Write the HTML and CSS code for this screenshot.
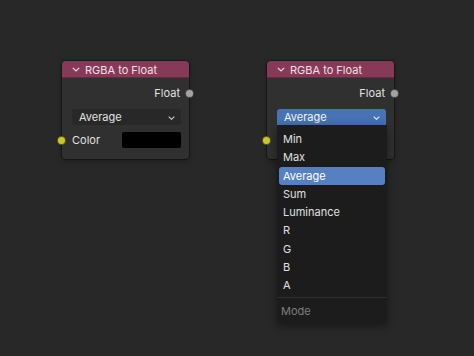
FILE: index.html
```html
<!DOCTYPE html>
<html>
<head>
<meta charset="utf-8">
<link rel="stylesheet" href="styles.css">
</head>
<body>
<div class="canvas">
  <div class="node">
    <div class="header">
      <svg class="chev" width="8" height="5" viewBox="0 0 8 5"><path d="M0.8 0.8 L4 4 L7.2 0.8" fill="none" stroke="#e6d8de" stroke-width="1.2"/></svg>
      <span>RGBA to Float</span>
    </div>
    <div class="body">
      <div class="row out">
        <span>Float</span>
        <i class="sock gray right"></i>
      </div>
      <div class="select">
        <span>Average</span>
        <svg class="dchev" width="7" height="4" viewBox="0 0 7 4"><path d="M0.7 0.7 L3.5 3.3 L6.3 0.7" fill="none" stroke="#cfcfcf" stroke-width="1.1"/></svg>
      </div>
      <div class="row in">
        <i class="sock yellow left"></i>
        <span class="lbl">Color</span>
        <div class="swatch"></div>
      </div>
    </div>
  </div>

  <div class="node">
    <div class="header">
      <svg class="chev" width="8" height="5" viewBox="0 0 8 5"><path d="M0.8 0.8 L4 4 L7.2 0.8" fill="none" stroke="#e6d8de" stroke-width="1.2"/></svg>
      <span>RGBA to Float</span>
    </div>
    <div class="body">
      <div class="row out">
        <span>Float</span>
        <i class="sock gray right"></i>
      </div>
      <div class="select open">
        <span>Average</span>
        <svg class="dchev" width="7" height="4" viewBox="0 0 7 4"><path d="M0.7 0.7 L3.5 3.3 L6.3 0.7" fill="none" stroke="#e8eefa" stroke-width="1.1"/></svg>
        <div class="menu">
          <div class="item">Min</div>
          <div class="item">Max</div>
          <div class="item active">Average</div>
          <div class="item">Sum</div>
          <div class="item">Luminance</div>
          <div class="item">R</div>
          <div class="item">G</div>
          <div class="item">B</div>
          <div class="item">A</div>
          <div class="sep"></div>
          <div class="item title">Mode</div>
        </div>
      </div>
      <div class="row in covered">
        <i class="sock yellow left"></i>
        <span class="lbl">Color</span>
        <div class="swatch"></div>
      </div>
    </div>
  </div>
</div>
</body>
</html>
```
FILE: styles.css
```css
html, body {
  margin: 0;
  padding: 0;
  background: #282828;
  width: 474px;
  height: 356px;
  overflow: hidden;
}
body {
  font-family: Inter, "DejaVu Sans", sans-serif;
  font-size: 11px;
  color: #e2e2e2;
}
.canvas {
  display: flex;
  gap: 78px;
  padding: 61px 0 0 62px;
}
.node {
  width: 127px;
  height: 98px;
  background: #303030;
  border-radius: 4px;
  box-shadow: 0 0 0 1px rgba(0,0,0,0.35), 0 2px 6px rgba(0,0,0,0.3);
  position: relative;
}
.header {
  height: 17px;
  background: #873a57;
  border-radius: 4px 4px 0 0;
  display: flex;
  align-items: center;
  padding-left: 10px;
  color: #ece2e6;
  box-shadow: inset 0 -1px 0 rgba(0,0,0,0.25);
}
.chev {
  margin-right: 5px;
}
.body {
  padding: 7px 8px 0 10px;
  display: flex;
  flex-direction: column;
}
.row {
  height: 16px;
  display: flex;
  align-items: center;
  position: relative;
}
.row.out {
  justify-content: flex-end;
  padding-right: 1px;
}
.sock {
  position: absolute;
  width: 7px;
  height: 7px;
  border-radius: 50%;
  top: 4px;
  border: 1px solid rgba(0,0,0,0.55);
}
.sock.gray {
  background: #a3a3a3;
  right: -13px;
}
.sock.yellow {
  background: #c8c82a;
  left: -15px;
}
.select {
  margin-top: 8px;
  height: 16px;
  background: #282828;
  border-radius: 3px;
  display: flex;
  align-items: center;
  justify-content: space-between;
  padding: 0 6px 0 7px;
  position: relative;
}
.select.open {
  background: #4772b3;
  color: #f2f4f8;
  border-radius: 3px 3px 0 0;
}
.dchev {
  margin-top: 1px;
}
.row.in {
  margin-top: 7px;
}
.lbl {
  flex: 1;
}
.covered .lbl,
.covered .swatch {
  visibility: hidden;
}
.swatch {
  width: 59px;
  height: 16px;
  background: #000;
  border-radius: 2px;
}
.menu {
  position: absolute;
  left: 0;
  top: 16px;
  width: 110px;
  background: #1c1c1c;
  border-radius: 0 0 4px 4px;
  padding: 5px 2px 2px;
  box-sizing: border-box;
  box-shadow: 0 3px 8px rgba(0,0,0,0.45);
  z-index: 5;
  color: #e0e0e0;
}
.item {
  height: 18.25px;
  line-height: 18.25px;
  padding-left: 4px;
  border-radius: 3px;
}
.item.active {
  background: #5680c2;
  color: #fff;
}
.sep {
  height: 1px;
  background: #2e2e2e;
  margin: 3px -2px 4px;
}
.item.title {
  color: #7e7e7e;
  padding-left: 2px;
}
```
